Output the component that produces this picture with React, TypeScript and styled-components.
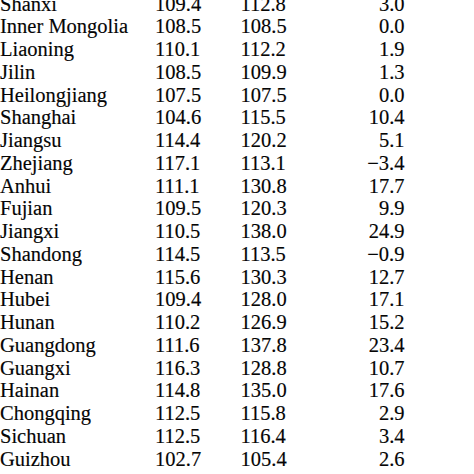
import React from 'react';
import styled, {createGlobalStyle} from 'styled-components';

const GlobalStyle = createGlobalStyle`
  html, body {
    margin: 0;
    padding: 0;
    background: #ffffff;
  }
  body {
    overflow: hidden;
  }
`;

type Row = [string, string, string, string];

const rows: Row[] = [
  ['Shanxi', '109.4', '112.8', '3.0'],
  ['Inner Mongolia', '108.5', '108.5', '0.0'],
  ['Liaoning', '110.1', '112.2', '1.9'],
  ['Jilin', '108.5', '109.9', '1.3'],
  ['Heilongjiang', '107.5', '107.5', '0.0'],
  ['Shanghai', '104.6', '115.5', '10.4'],
  ['Jiangsu', '114.4', '120.2', '5.1'],
  ['Zhejiang', '117.1', '113.1', '\u22123.4'],
  ['Anhui', '111.1', '130.8', '17.7'],
  ['Fujian', '109.5', '120.3', '9.9'],
  ['Jiangxi', '110.5', '138.0', '24.9'],
  ['Shandong', '114.5', '113.5', '\u22120.9'],
  ['Henan', '115.6', '130.3', '12.7'],
  ['Hubei', '109.4', '128.0', '17.1'],
  ['Hunan', '110.2', '126.9', '15.2'],
  ['Guangdong', '111.6', '137.8', '23.4'],
  ['Guangxi', '116.3', '128.8', '10.7'],
  ['Hainan', '114.8', '135.0', '17.6'],
  ['Chongqing', '112.5', '115.8', '2.9'],
  ['Sichuan', '112.5', '116.4', '3.4'],
  ['Guizhou', '102.7', '105.4', '2.6'],
];

const Table = styled.div`
  display: grid;
  grid-template-columns: 155px 85.5px 80px 84px;
  grid-auto-rows: 22.75px;
  margin-top: -7.3px;
  font-family: "Liberation Serif", "Times New Roman", serif;
  font-size: 20.5px;
  line-height: 22.75px;
  color: #050505;
  -webkit-text-stroke: 0.15px #050505;
  white-space: nowrap;
`;

const Cell = styled.div<{$align?: 'left' | 'right'}>`
  text-align: ${(p) => p.$align ?? 'left'};
`;

export default function App() {
  return (
    <>
      <GlobalStyle/>
      <Table>
        {rows.map(([name, a, b, change]) => (
          <React.Fragment key={name}>
            <Cell>{name}</Cell>
            <Cell>{a}</Cell>
            <Cell>{b}</Cell>
            <Cell $align='right'>{change}</Cell>
          </React.Fragment>
        ))}
      </Table>
    </>
  );
}
